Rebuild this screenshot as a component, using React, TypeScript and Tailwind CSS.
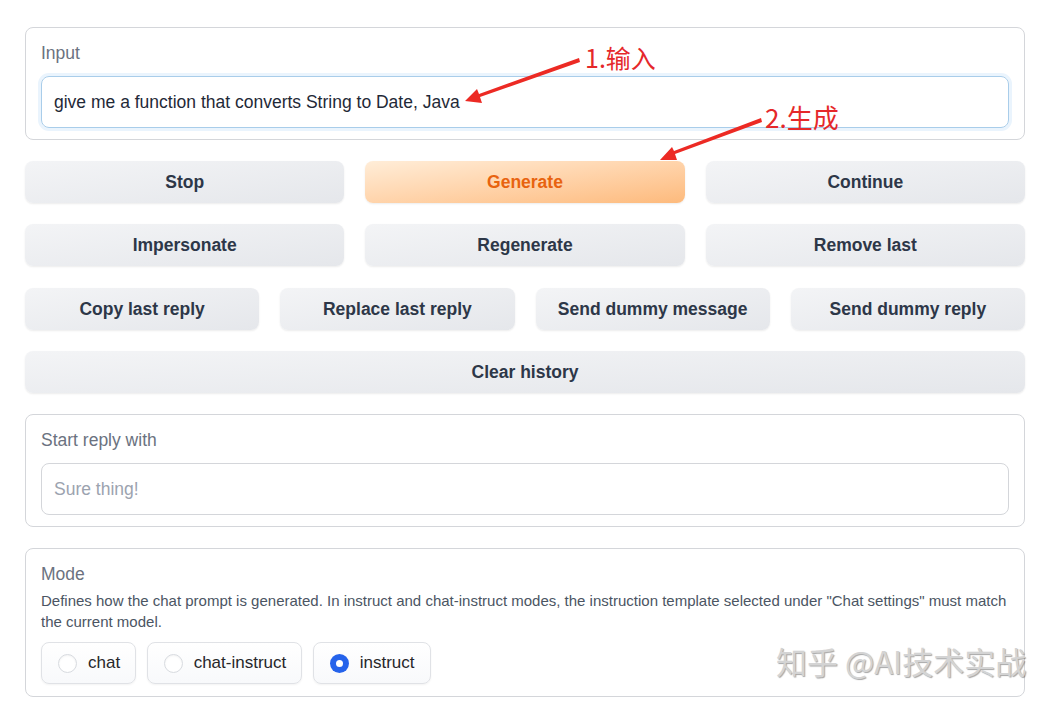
import React from "react";

const btn =
  "h-[42px] rounded-lg bg-gradient-to-br from-[#f3f4f6] to-[#e5e7eb] text-[#2d3748] font-bold text-[17.5px] shadow-[0_1px_2px_rgba(0,0,0,0.08)] flex items-center justify-center";

function Radio({ label, checked }: { label: string; checked?: boolean }) {
  return (
    <div className="h-[42px] flex items-center gap-[11px] pl-[16px] pr-[15px] rounded-lg border border-[#e0e2e6] bg-gradient-to-b from-white to-[#f8f9fb] shadow-[0_1px_2px_rgba(0,0,0,0.05)]">
      {checked ? (
        <span className="w-[19px] h-[19px] rounded-full bg-[#2563eb] flex items-center justify-center">
          <span className="w-[7px] h-[7px] rounded-full bg-white" />
        </span>
      ) : (
        <span className="w-[19px] h-[19px] rounded-full border border-[#d8dbe0] bg-white shadow-[inset_0_1px_2px_rgba(0,0,0,0.05)]" />
      )}
      <span className="text-[17px] text-[#27272a]">{label}</span>
    </div>
  );
}

export default function App() {
  return (
    <div
      className="relative w-[1055px] h-[706px] bg-white overflow-hidden"
      style={{ fontFamily: '"Liberation Sans", Arial, "Noto Sans CJK SC", sans-serif' }}
    >
      <div className="w-[1000px] ml-[25px] pt-[27px] flex flex-col gap-[21px]">
        {/* Input panel */}
        <div className="border border-[#d4d6da] rounded-lg px-[15px] pt-[15px] pb-[11px] flex flex-col gap-[13px]">
          <div className="text-[17.5px] leading-[20px] text-[#6b7280]">Input</div>
          <div className="h-[52px] rounded-lg border border-[#a9cdea] shadow-[0_0_0_3px_#eaf4fd] flex items-center px-[12px] text-[17.5px] text-[#1f2937]">
            give me a function that converts String to Date, Java
          </div>
        </div>

        <div className="grid grid-cols-3 gap-[21px]">
          <div className={btn}>Stop</div>
          <div className="h-[42px] rounded-lg bg-gradient-to-br from-[#ffedd8] to-[#fdba7c] text-[#e8630f] font-bold text-[17.5px] shadow-[0_1px_2px_rgba(0,0,0,0.08)] flex items-center justify-center">
            Generate
          </div>
          <div className={btn}>Continue</div>
        </div>
        <div className="grid grid-cols-3 gap-[21px]">
          <div className={btn}>Impersonate</div>
          <div className={btn}>Regenerate</div>
          <div className={btn}>Remove last</div>
        </div>
        <div className="grid grid-cols-4 gap-[21px] mt-[1px]">
          <div className={btn}>Copy last reply</div>
          <div className={btn}>Replace last reply</div>
          <div className={btn}>Send dummy message</div>
          <div className={btn}>Send dummy reply</div>
        </div>
        <div className={btn}>Clear history</div>

        {/* Start reply with */}
        <div className="border border-[#d4d6da] rounded-lg px-[15px] pt-[15px] pb-[11px] flex flex-col gap-[13px]">
          <div className="text-[17.5px] leading-[20px] text-[#6b7280]">Start reply with</div>
          <div className="h-[52px] rounded-lg border border-[#d4d6da] flex items-center px-[12px] text-[17.5px] text-[#9ca3af]">
            Sure thing!
          </div>
        </div>

        {/* Mode */}
        <div className="border border-[#d4d6da] rounded-lg px-[15px] pt-[15px] pb-[12px] flex flex-col">
          <div className="text-[17.5px] leading-[20px] text-[#6b7280]">Mode</div>
          <div className="mt-[6px] text-[15px] leading-[21px] text-[#4b5563]">
            Defines how the chat prompt is generated. In instruct and chat-instruct modes, the instruction template selected under "Chat settings" must match the current model.
          </div>
          <div className="mt-[10px] flex gap-[10.5px]">
            <Radio label="chat" />
            <Radio label="chat-instruct" />
            <Radio label="instruct" checked />
          </div>
        </div>
      </div>

      {/* annotations */}
      <svg className="absolute left-0 top-0 pointer-events-none" width="1055" height="706">
        <polygon points="579,58 580,62 480,97 482,103 465,101 477,89 479,94" fill="#ec2a24" />
        <polygon points="761,118 762,122 675,154 677,160 660,160 672,147 674,151" fill="#ec2a24" />
      </svg>
      <div
        className="absolute left-[585px] top-[40px] text-[25px] leading-[34px] text-[#e5282a]"
        style={{ fontFamily: '"Noto Sans CJK SC", "Liberation Sans", sans-serif' }}
      >
        1.输入
      </div>
      <div
        className="absolute left-[765px] top-[100px] text-[26px] leading-[34px] text-[#e5282a]"
        style={{ fontFamily: '"Noto Sans CJK SC", "Liberation Sans", sans-serif' }}
      >
        2.生成
      </div>
      <div
        className="absolute left-[776px] top-[641px] text-[31px] leading-[40px] text-[#d4d4d4] [text-shadow:1px_1px_1px_rgba(0,0,0,0.35)]"
        style={{ fontFamily: '"Noto Sans CJK SC", "Liberation Sans", sans-serif' }}
      >
        知乎 @AI技术实战
      </div>
    </div>
  );
}
